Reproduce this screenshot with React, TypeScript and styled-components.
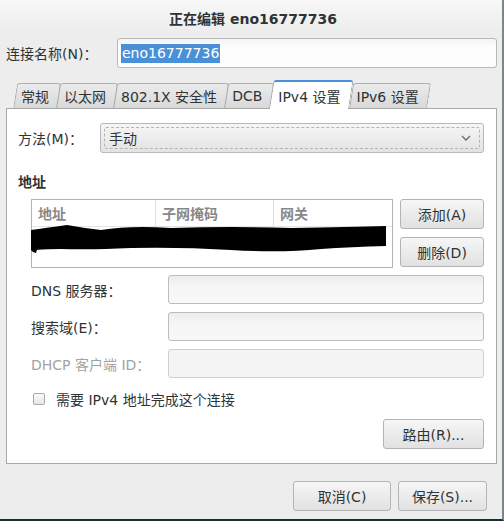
import React from "react";
import styled, { createGlobalStyle } from "styled-components";

const Global = createGlobalStyle`
  html, body { margin: 0; padding: 0; background: #ededed; }
  body {
    font-family: "DejaVu Sans", "Noto Sans CJK SC", sans-serif;
    font-size: 14px;
    color: #2e3436;
  }
  * { box-sizing: border-box; }
`;

const Window = styled.div`
  width: 504px;
  height: 521px;
  background: #ededed;
  border-right: 2px solid #7d8588;
  border-bottom: 2px solid #1f2d33;
  display: flex;
  flex-direction: column;
`;

const TitleBar = styled.div`
  height: 36px;
  display: flex;
  align-items: center;
  justify-content: center;
  font-weight: bold;
  font-size: 14px;
  color: #2e3436;
  background: linear-gradient(#f7f7f7, #ececec);
  padding-left: 4px;
`;

const NameRow = styled.div`
  margin-top: 2px;
  height: 30px;
  display: flex;
  align-items: center;
  padding-left: 6px;
`;

const NameLabel = styled.span`
  width: 111px;
`;

const NameInput = styled.div`
  width: 380px;
  height: 30px;
  border: 1px solid #b8b8b8;
  border-radius: 3px;
  background: linear-gradient(#f4f4f4, #fdfdfd 30%);
  display: flex;
  align-items: center;
  padding-left: 3px;
`;

const Selected = styled.span`
  background: #4a90d9;
  color: #fff;
  line-height: 19px;
  padding: 0 1px;
`;

const TabRow = styled.div`
  margin-top: 12px;
  height: 28px;
  display: flex;
  align-items: flex-end;
  padding-left: 13px;
  position: relative;
  z-index: 1;
`;

const Tab = styled.div<{ $active?: boolean }>`
  position: relative;
  z-index: ${(p) => (p.$active ? 2 : 0)};
  isolation: isolate;
  height: ${(p) => (p.$active ? 29 : 26)}px;
  margin-bottom: -1px;
  margin-right: -1px;
  padding: ${(p) => (p.$active ? "3px 9px 0 9px" : "0 8px")};
  display: flex;
  align-items: center;
  color: #2e3436;
  white-space: nowrap;
  &::before {
    content: "";
    position: absolute;
    inset: 0;
    z-index: -1;
    transform-origin: bottom left;
    transform: skewX(-9deg);
    border: 1px solid #a8a8a8;
    border-bottom: ${(p) => (p.$active ? "none" : "1px solid #a8a8a8")};
    border-top: ${(p) => (p.$active ? "2px solid #4a90d9" : "1px solid #b0b0b0")};
    border-radius: 3px 3px 0 0;
    background: ${(p) =>
      p.$active ? "#ffffff" : "linear-gradient(#ebebeb, #d9d9d9)"};
  }
`;

const Panel = styled.div`
  margin: 0 5px 0 6px;
  height: 356px;
  background: #fff;
  border: 1px solid #a8a8a8;
  padding: 14px 12px 0 11px;
  display: flex;
  flex-direction: column;
`;

const MethodRow = styled.div`
  display: flex;
  align-items: center;
  height: 30px;
`;

const MethodLabel = styled.span`
  width: 82px;
`;

const Combo = styled.div`
  position: relative;
  width: 384px;
  height: 30px;
  border: 1px solid #b8b8b8;
  border-radius: 3px;
  background: linear-gradient(#f6f6f6, #e3e3e3);
  display: flex;
  align-items: center;
  justify-content: space-between;
  padding: 0 12px 0 8px;
  &::after {
    content: "";
    position: absolute;
    inset: 3px;
    border: 1px dashed #b4b4b4;
    border-radius: 2px;
  }
`;

const Heading = styled.div`
  margin-top: 21px;
  font-weight: bold;
  line-height: 17px;
  color: #2e3436;
`;

const Section = styled.div`
  padding-left: 13px;
  display: flex;
  flex-direction: column;
`;

const AddrRow = styled.div`
  margin-top: 8px;
  display: flex;
  gap: 7px;
`;

const Table = styled.div`
  position: relative;
  width: 362px;
  height: 69px;
  border: 1px solid #b4b4b4;
  background: #fff;
`;

const HeaderRow = styled.div`
  display: grid;
  grid-template-columns: 123px 118px 1fr;
  height: 27px;
  border-bottom: 1px solid #e4e4e4;
`;

const HeaderCell = styled.div<{ $first?: boolean }>`
  display: flex;
  align-items: center;
  padding-left: 6px;
  color: #888;
  font-weight: bold;
  font-size: 14px;
  border-left: ${(p) => (p.$first ? "none" : "1px solid #e0e0e0")};
`;

const Scribble = styled.svg`
  position: absolute;
  left: -1px;
  top: 1px;
`;

const ButtonCol = styled.div`
  display: flex;
  flex-direction: column;
  gap: 8px;
`;

const Button = styled.button<{ $w: number }>`
  width: ${(p) => p.$w}px;
  height: 30px;
  border: 1px solid #b4b4b4;
  border-radius: 3px;
  background: linear-gradient(#f6f6f6, #e1e1e1);
  font-family: "DejaVu Sans", "Noto Sans CJK SC", sans-serif;
  font-size: 14px;
  color: #2e3436;
  padding: 0;
  display: flex;
  align-items: center;
  justify-content: center;
`;

const FormRows = styled.div`
  margin-top: 7px;
  display: flex;
  flex-direction: column;
  gap: 8px;
`;

const FormRow = styled.div`
  display: flex;
  align-items: center;
  height: 29px;
`;

const FormLabel = styled.span<{ $disabled?: boolean }>`
  width: 137px;
  color: ${(p) => (p.$disabled ? "#a3a3a3" : "#2e3436")};
`;

const TextInput = styled.div<{ $disabled?: boolean }>`
  width: 316px;
  height: 29px;
  border: 1px solid ${(p) => (p.$disabled ? "#cfcfcf" : "#bdbdbd")};
  border-radius: 3px;
  background: ${(p) =>
    p.$disabled ? "#f4f4f4" : "linear-gradient(#ececec, #f6f6f6 40%, #f8f8f8)"};
`;

const CheckRow = styled.div`
  margin-top: 12px;
  display: flex;
  align-items: center;
  height: 17px;
  padding-left: 15px;
  gap: 11px;
`;

const CheckBox = styled.span`
  width: 12px;
  height: 12px;
  border: 1px solid #a8a8a8;
  border-radius: 2px;
  background: linear-gradient(#fafafa, #e6e6e6);
`;

const RouteRow = styled.div`
  margin-top: 12px;
  display: flex;
  justify-content: flex-end;
`;

const Footer = styled.div`
  margin-top: 17px;
  display: flex;
  justify-content: flex-end;
  gap: 7px;
  padding-right: 15px;
`;

export default function App() {
  return (
    <>
      <Global />
      <Window>
        <TitleBar>正在编辑 eno16777736</TitleBar>
        <NameRow>
          <NameLabel>连接名称(N)：</NameLabel>
          <NameInput>
            <Selected>eno16777736</Selected>
          </NameInput>
        </NameRow>
        <TabRow>
          <Tab>常规</Tab>
          <Tab>以太网</Tab>
          <Tab>802.1X 安全性</Tab>
          <Tab>DCB</Tab>
          <Tab $active>IPv4 设置</Tab>
          <Tab>IPv6 设置</Tab>
        </TabRow>
        <Panel>
          <MethodRow>
            <MethodLabel>方法(M)：</MethodLabel>
            <Combo>
              <span>手动</span>
              <svg width="10" height="6" viewBox="0 0 10 6">
                <path d="M1 1 L5 5 L9 1" fill="none" stroke="#6a6a6a" strokeWidth="1.3" />
              </svg>
            </Combo>
          </MethodRow>
          <Heading>地址</Heading>
          <Section>
            <AddrRow>
              <Table>
                <HeaderRow>
                  <HeaderCell $first>地址</HeaderCell>
                  <HeaderCell>子网掩码</HeaderCell>
                  <HeaderCell>网关</HeaderCell>
                </HeaderRow>
                <Scribble width="362" height="69" viewBox="0 0 362 69">
                  <path
                    d="M0 29 Q14 27 36 24 Q52 27 70 29 Q100 24 140 27 Q200 25 260 27 Q320 26 355 25 L355 45 Q320 46 290 48 Q250 52 200 49 Q150 46 100 47 Q60 49 30 48 Q10 48 6 49 L5 52 L2 51 L0 49 Z"
                    fill="#000"
                  />
                </Scribble>
              </Table>
              <ButtonCol>
                <Button $w={84}>添加(A)</Button>
                <Button $w={84}>删除(D)</Button>
              </ButtonCol>
            </AddrRow>
            <FormRows>
              <FormRow>
                <FormLabel>DNS 服务器：</FormLabel>
                <TextInput />
              </FormRow>
              <FormRow>
                <FormLabel>搜索域(E)：</FormLabel>
                <TextInput />
              </FormRow>
              <FormRow>
                <FormLabel $disabled>DHCP 客户端 ID：</FormLabel>
                <TextInput $disabled />
              </FormRow>
            </FormRows>
          </Section>
          <CheckRow>
            <CheckBox />
            <span>需要 IPv4 地址完成这个连接</span>
          </CheckRow>
          <RouteRow>
            <Button $w={101}>路由(R)...</Button>
          </RouteRow>
        </Panel>
        <Footer>
          <Button $w={98}>取消(C)</Button>
          <Button $w={89}>保存(S)...</Button>
        </Footer>
      </Window>
    </>
  );
}
